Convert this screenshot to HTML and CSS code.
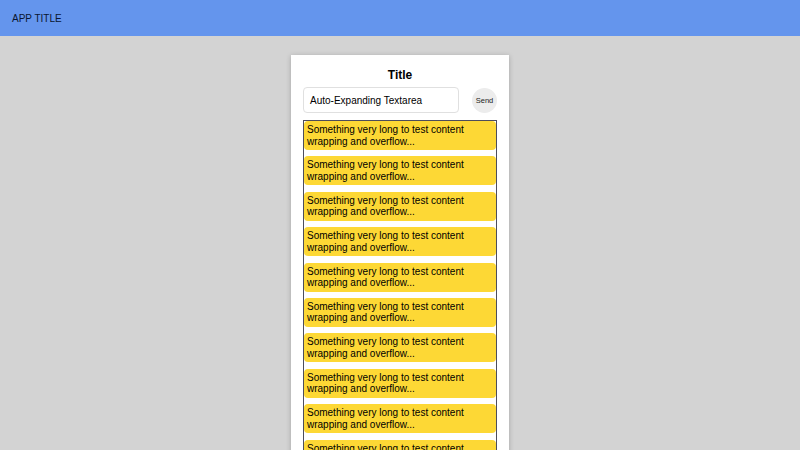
FILE: index.html
```html
<!DOCTYPE html>
<html>
<head>
<meta charset="utf-8">
<link rel="stylesheet" href="styles.css">
</head>
<body>
<header class="appbar">APP TITLE</header>
<main class="main">
  <section class="card">
    <h1 class="title">Title</h1>
    <div class="composer">
      <div class="textarea">Auto-Expanding Textarea</div>
      <button class="send">Send</button>
    </div>
    <div class="list">
      <div class="item">Something very long to test content wrapping and overflow...</div>
      <div class="item">Something very long to test content wrapping and overflow...</div>
      <div class="item">Something very long to test content wrapping and overflow...</div>
      <div class="item">Something very long to test content wrapping and overflow...</div>
      <div class="item">Something very long to test content wrapping and overflow...</div>
      <div class="item">Something very long to test content wrapping and overflow...</div>
      <div class="item">Something very long to test content wrapping and overflow...</div>
      <div class="item">Something very long to test content wrapping and overflow...</div>
      <div class="item">Something very long to test content wrapping and overflow...</div>
      <div class="item">Something very long to test content wrapping and overflow...</div>
    </div>
  </section>
</main>
</body>
</html>
```

FILE: styles.css
```css
* { box-sizing: border-box; }
html, body { margin: 0; height: 100%; overflow: hidden; }
body {
  background: #d3d3d3;
  font-family: "Liberation Sans", Arial, sans-serif;
  color: #000;
}
.appbar {
  height: 36px;
  background: #6495ed;
  display: flex;
  align-items: center;
  padding-left: 12px;
  font-size: 10px;
  color: #0a1530;
}
.main {
  display: flex;
  justify-content: center;
  padding-top: 19px;
}
.card {
  width: 218px;
  background: #fff;
  padding: 12px 12px 0;
  box-shadow: 0 1px 5px rgba(0,0,0,0.22);
  display: flex;
  flex-direction: column;
}
.title {
  margin: 0;
  font-size: 12px;
  line-height: 16px;
  font-weight: bold;
  text-align: center;
}
.composer {
  margin-top: 4px;
  display: flex;
  align-items: center;
  justify-content: space-between;
}
.textarea {
  width: 156px;
  height: 26px;
  border: 1px solid #e0e0e0;
  border-radius: 4px;
  padding: 0 6px;
  display: flex;
  align-items: center;
  font-size: 10px;
}
.send {
  width: 25px;
  height: 25px;
  border-radius: 50%;
  border: none;
  background: #ececec;
  font-family: "Liberation Sans", Arial, sans-serif;
  font-size: 7.5px;
  padding: 0;
  color: #222;
}
.list {
  margin-top: 7px;
  border: 1px solid #4d4d5c;
  padding: 0;
  display: flex;
  flex-direction: column;
  gap: 6.4px;
}
.item {
  background: #fdd835;
  border-radius: 4px;
  padding: 3px 3px;
  font-size: 10px;
  line-height: 11.5px;
}
```
